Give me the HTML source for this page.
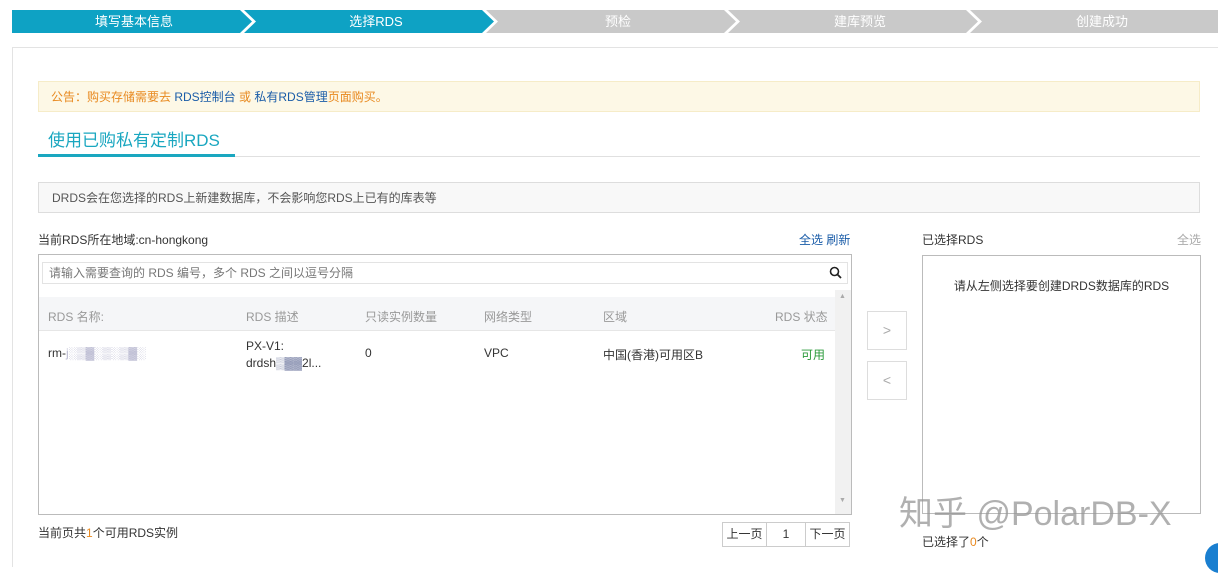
<!DOCTYPE html><html><head><meta charset="utf-8"><style>
*{box-sizing:border-box;margin:0;padding:0}
body{width:1218px;height:555px;overflow:hidden;background:#fff;font-family:"Liberation Sans","Noto Sans CJK SC",sans-serif;font-size:12px;color:#333;position:relative}
.a{position:absolute}
.step{position:absolute;top:10px;height:23px;color:#fff;font-size:13px;line-height:23px;text-align:center}
</style></head><body>
<svg class="a" style="left:0;top:10px" width="1218" height="23">
<polygon points="12,0 240,0 252,11.5 240,23 12,23" fill="#0ea2c4"/>
<polygon points="244,0 482,0 494,11.5 482,23 244,23 256,11.5" fill="#0ea2c4"/>
<polygon points="486,0 724,0 736,11.5 724,23 486,23 498,11.5" fill="#c9c9c9"/>
<polygon points="728,0 966,0 978,11.5 966,23 728,23 740,11.5" fill="#c9c9c9"/>
<polygon points="970,0 1218,0 1218,23 970,23 982,11.5" fill="#c9c9c9"/>
</svg>
<div class="step" style="left:12px;width:244px">填写基本信息</div>
<div class="step" style="left:254px;width:244px">选择RDS</div>
<div class="step" style="left:496px;width:244px">预检</div>
<div class="step" style="left:738px;width:244px">建库预览</div>
<div class="step" style="left:980px;width:244px">创建成功</div>
<div class="a" style="left:12px;top:47px;width:1210px;height:520px;border:1px solid #e3e3e3;border-right:none;border-bottom:none"></div>
<div class="a" style="left:38px;top:81px;width:1162px;height:31px;background:#fdf8e6;border:1px solid #f6ecc8;line-height:30px;padding-left:12px;color:#e8891f">公告：购买存储需要去 <span style="color:#1a5ca8">RDS控制台</span> 或 <span style="color:#1a5ca8">私有RDS管理</span>页面购买。</div>
<div class="a" style="left:48px;top:126px;font-size:17px;color:#1aa7c0">使用已购私有定制RDS</div>
<div class="a" style="left:38px;top:156px;width:1162px;height:1px;background:#e0e0e0"></div>
<div class="a" style="left:38px;top:154px;width:197px;height:3px;background:#1aa7c0"></div>
<div class="a" style="left:38px;top:182px;width:1162px;height:31px;background:#f8f8f8;border:1px solid #ddd;line-height:30px;padding-left:13px;color:#555">DRDS会在您选择的RDS上新建数据库，不会影响您RDS上已有的库表等</div>
<div class="a" style="left:38px;top:231px">当前RDS所在地域:cn-hongkong</div>
<div class="a" style="left:799px;top:231px;color:#1a5ca8">全选 刷新</div>
<div class="a" style="left:922px;top:231px">已选择RDS</div>
<div class="a" style="left:1177px;top:231px;color:#aaa">全选</div>
<div class="a" style="left:38px;top:254px;width:814px;height:261px;border:1px solid #bbb"></div>
<div class="a" style="left:42px;top:262px;width:806px;height:22px;border:1px solid #e3e3e3;line-height:20px;padding-left:6px;color:#777">请输入需要查询的 RDS 编号，多个 RDS 之间以逗号分隔</div>
<svg class="a" style="left:829px;top:266px" width="14" height="14"><circle cx="5.5" cy="5.5" r="4" fill="none" stroke="#222" stroke-width="1.6"/><line x1="8.5" y1="8.5" x2="12" y2="12" stroke="#222" stroke-width="1.8"/></svg>
<div class="a" style="left:39px;top:297px;width:796px;height:34px;background:#f5f6f8;border-bottom:1px solid #e6e6e6"></div>
<div class="a" style="left:835px;top:290px;width:16px;height:224px;background:#f1f1f1"></div>
<div class="a" style="left:839px;top:293px;color:#aaa;font-size:7px">▲</div>
<div class="a" style="left:839px;top:497px;color:#aaa;font-size:7px">▼</div>
<div class="a" style="left:48px;top:308px;color:#999">RDS 名称:</div>
<div class="a" style="left:246px;top:308px;color:#999">RDS 描述</div>
<div class="a" style="left:365px;top:308px;color:#999">只读实例数量</div>
<div class="a" style="left:484px;top:308px;color:#999">网络类型</div>
<div class="a" style="left:603px;top:308px;color:#999">区域</div>
<div class="a" style="left:775px;top:308px;color:#999">RDS 状态</div>
<div class="a" style="left:48px;top:346px">rm-<span style="color:#b8b8d0">j░▒▓░▒░▒▓░</span></div>
<div class="a" style="left:246px;top:338px;line-height:17px">PX-V1:<br>drdsh<span style="color:#8890b0">▒▓▓</span>2l...</div>
<div class="a" style="left:365px;top:346px">0</div>
<div class="a" style="left:484px;top:346px">VPC</div>
<div class="a" style="left:603px;top:346px">中国(香港)可用区B</div>
<div class="a" style="left:801px;top:346px;color:#2a9a3a">可用</div>
<div class="a" style="left:867px;top:311px;width:40px;height:39px;border:1px solid #ddd;text-align:center;line-height:37px;color:#aaa;font-size:14px">&gt;</div>
<div class="a" style="left:867px;top:361px;width:40px;height:39px;border:1px solid #ddd;text-align:center;line-height:37px;color:#aaa;font-size:14px">&lt;</div>
<div class="a" style="left:922px;top:255px;width:279px;height:259px;border:1px solid #bbb;text-align:center;padding-top:21px">请从左侧选择要创建DRDS数据库的RDS</div>
<div class="a" style="left:38px;top:524px">当前页共<span style="color:#e8891f">1</span>个可用RDS实例</div>
<div class="a" style="left:722px;top:522px;width:128px;height:25px;border:1px solid #ccc;display:flex;line-height:23px;text-align:center">
<div style="width:44px;border-right:1px solid #ccc">上一页</div><div style="width:39px;border-right:1px solid #ccc">1</div><div style="flex:1">下一页</div></div>
<div class="a" style="left:922px;top:533px">已选择了<span style="color:#e8891f">0</span>个</div>
<div class="a" style="left:899px;top:486px;font-size:34px;color:rgba(150,150,150,.75)">知乎 @PolarDB-X</div>
<div class="a" style="left:1205px;top:543px;width:30px;height:30px;border-radius:50%;background:#1a7fd0"></div>
</body></html>
